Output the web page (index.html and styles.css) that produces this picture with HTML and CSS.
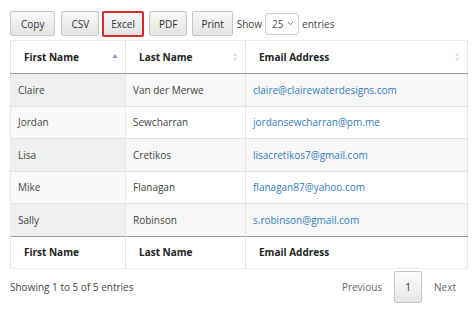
FILE: index.html
```html
<!DOCTYPE html>
<html>
<head>
<meta charset="utf-8">
<link rel="stylesheet" href="styles.css">
</head>
<body>
<div class="wrap">
  <div class="toolbar">
    <button class="btn">Copy</button>
    <button class="btn">CSV</button>
    <button class="btn btn-hl">Excel</button>
    <button class="btn">PDF</button>
    <button class="btn">Print</button>
    <span class="len">Show
      <span class="select">25
        <svg width="7" height="5" viewBox="0 0 7 5"><path d="M1 1.2 L3.5 3.6 L6 1.2" fill="none" stroke="#777" stroke-width="1"/></svg>
      </span>
      entries</span>
  </div>
  <table class="grid">
    <colgroup><col class="c1"><col class="c2"><col class="c3"></colgroup>
    <thead>
      <tr>
        <th><div class="th-in">First Name<svg class="sort" width="6" height="10" viewBox="0 0 6 10"><path d="M3 2 L5.5 6 L0.5 6 Z" fill="#8c92c6"/></svg></div></th>
        <th><div class="th-in">Last Name<svg class="sort" width="6" height="10" viewBox="0 0 6 10"><path d="M3 1 L5 4 L1 4 Z M3 9 L5 6 L1 6 Z" fill="#dcdcdc"/></svg></div></th>
        <th><div class="th-in">Email Address<svg class="sort" width="6" height="10" viewBox="0 0 6 10"><path d="M3 1 L5 4 L1 4 Z M3 9 L5 6 L1 6 Z" fill="#dcdcdc"/></svg></div></th>
      </tr>
    </thead>
    <tbody>
      <tr class="odd"><td class="s">Claire</td><td>Van der Merwe</td><td><a>claire@clairewaterdesigns.com</a></td></tr>
      <tr class="even"><td class="s">Jordan</td><td>Sewcharran</td><td><a>jordansewcharran@pm.me</a></td></tr>
      <tr class="odd"><td class="s">Lisa</td><td>Cretikos</td><td><a>lisacretikos7@gmail.com</a></td></tr>
      <tr class="even"><td class="s">Mike</td><td>Flanagan</td><td><a>flanagan87@yahoo.com</a></td></tr>
      <tr class="odd"><td class="s">Sally</td><td>Robinson</td><td><a>s.robinson@gmail.com</a></td></tr>
    </tbody>
    <tfoot>
      <tr><th>First Name</th><th>Last Name</th><th>Email Address</th></tr>
    </tfoot>
  </table>
  <div class="footer">
    <div class="info">Showing 1 to 5 of 5 entries</div>
    <div class="pager">
      <span class="pg">Previous</span>
      <span class="pg cur">1</span>
      <span class="pg">Next</span>
    </div>
  </div>
</div>
</body>
</html>
```
FILE: styles.css
```css
html, body { margin: 0; padding: 0; background: #fff; }
body { font-family: "Open Sans", "Noto Sans", sans-serif; font-size: 10px; color: #333; }
.wrap { padding: 11px 6px 0 10px; }
.toolbar { display: flex; align-items: center; height: 25px; }
.btn {
  font-family: inherit; font-size: 10px; color: #333;
  height: 25px; padding: 0 9px; margin-right: 5px;
  border: 1px solid #c8c8c8; border-radius: 2px;
  background: linear-gradient(#f7f7f7, #e4e4e4);
}
.btn:first-child { margin-right: 6px; padding: 0 10px; }
.btn:nth-child(2) { margin-right: 3px; }
.btn-hl { border: 2px solid #d42a2a; padding: 0 7px; height: 26px; margin-right: 5px; }
.btn:nth-child(5) { padding: 0 8px; margin-right: 4px; }
.len { display: flex; align-items: center; gap: 3px; color: #444; }
.select {
  display: inline-flex; align-items: center; justify-content: space-between;
  width: 34px; height: 22px; box-sizing: border-box; padding: 0 4px 0 6px;
  border: 1px solid #cfcfcf; border-radius: 3px; color: #555;
}
.grid {
  margin-top: 4px; width: 458px; border-collapse: collapse; table-layout: fixed;
  border-left: 1px solid #e6e6e6; border-right: 1px solid #e6e6e6;
}
.c1 { width: 115px; }
.c2 { width: 120px; }
.grid th, .grid td { text-align: left; white-space: nowrap; }
.grid thead th {
  height: 32px; padding: 0 7px 0 13px; font-weight: 700; color: #222;
  border-top: 1px solid #ececec; border-bottom: 1px solid #9a9a9a;
  border-left: 1px solid #e2e2e2;
}
.th-in { display: flex; justify-content: space-between; align-items: center; }
.grid td {
  height: 31.5px; padding: 0 7px; color: #444;
  border-top: 1px solid #e2e2e2; border-left: 1px solid #e6e6e6;
}
.grid tbody tr:first-child td { border-top: none; }
.odd td { background: #f7f7f7; }
.odd td.s { background: #efefef; }
.even td.s { background: #fafafa; }
.grid td a { color: #2f7dbd; text-decoration: none; }
.grid tfoot th {
  height: 31px; padding: 0 13px; font-weight: 700; color: #222;
  border-top: 1px solid #9a9a9a; border-bottom: 1px solid #ececec; border-left: 1px solid #e2e2e2;
}
.footer { display: flex; justify-content: space-between; align-items: center; height: 34px; margin-top: 1px; }
.info { color: #444; }
.pager { display: flex; align-items: center; margin-right: 0; }
.pg { color: #666; padding: 0 12px; }
.pg.cur {
  display: flex; align-items: center; justify-content: center;
  width: 28px; height: 32px; box-sizing: border-box; padding: 0;
  border: 1px solid #c4c4c4; border-radius: 2px; color: #333;
  background: linear-gradient(#fdfdfd, #e6e6e6);
}
```
